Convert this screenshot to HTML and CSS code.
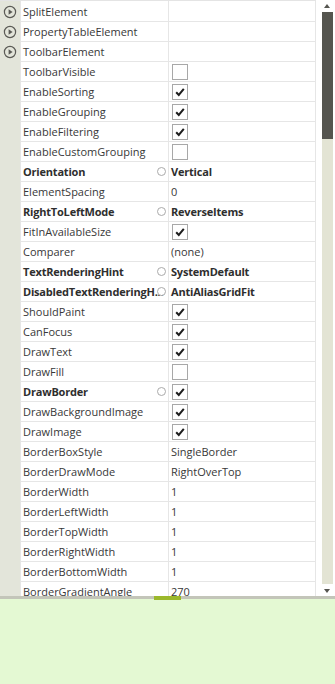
FILE: index.html
```html
<!DOCTYPE html>
<html>
<head>
<meta charset="utf-8">
<link rel="stylesheet" href="styles.css">
</head>
<body>
<div class="grid">
  <div class="rows">
    <div class="row first"><div class="gut"><svg class="exp" viewBox="0 0 14 14"><circle cx="7" cy="7" r="5.6"/><path d="M5.6 4.3 L9.6 7 L5.6 9.7 Z"/></svg></div><div class="name">SplitElement</div><div class="val"></div></div>
    <div class="row"><div class="gut"><svg class="exp" viewBox="0 0 14 14"><circle cx="7" cy="7" r="5.6"/><path d="M5.6 4.3 L9.6 7 L5.6 9.7 Z"/></svg></div><div class="name">PropertyTableElement</div><div class="val"></div></div>
    <div class="row"><div class="gut"><svg class="exp" viewBox="0 0 14 14"><circle cx="7" cy="7" r="5.6"/><path d="M5.6 4.3 L9.6 7 L5.6 9.7 Z"/></svg></div><div class="name">ToolbarElement</div><div class="val"></div></div>
    <div class="row"><div class="gut"></div><div class="name">ToolbarVisible</div><div class="val"><span class="cb"></span></div></div>
    <div class="row"><div class="gut"></div><div class="name">EnableSorting</div><div class="val"><span class="cb on"><svg viewBox="0 0 14 14"><path d="M3.2 7.2 L5.8 10 L10.8 3.8"/></svg></span></div></div>
    <div class="row"><div class="gut"></div><div class="name">EnableGrouping</div><div class="val"><span class="cb on"><svg viewBox="0 0 14 14"><path d="M3.2 7.2 L5.8 10 L10.8 3.8"/></svg></span></div></div>
    <div class="row"><div class="gut"></div><div class="name">EnableFiltering</div><div class="val"><span class="cb on"><svg viewBox="0 0 14 14"><path d="M3.2 7.2 L5.8 10 L10.8 3.8"/></svg></span></div></div>
    <div class="row"><div class="gut"></div><div class="name">EnableCustomGrouping</div><div class="val"><span class="cb"></span></div></div>
    <div class="row mod"><div class="gut"></div><div class="name">Orientation<span class="dot"></span></div><div class="val">Vertical</div></div>
    <div class="row"><div class="gut"></div><div class="name">ElementSpacing</div><div class="val">0</div></div>
    <div class="row mod"><div class="gut"></div><div class="name">RightToLeftMode<span class="dot"></span></div><div class="val">ReverseItems</div></div>
    <div class="row"><div class="gut"></div><div class="name">FitInAvailableSize</div><div class="val"><span class="cb on"><svg viewBox="0 0 14 14"><path d="M3.2 7.2 L5.8 10 L10.8 3.8"/></svg></span></div></div>
    <div class="row"><div class="gut"></div><div class="name">Comparer</div><div class="val">(none)</div></div>
    <div class="row mod"><div class="gut"></div><div class="name">TextRenderingHint<span class="dot"></span></div><div class="val">SystemDefault</div></div>
    <div class="row mod"><div class="gut"></div><div class="name">DisabledTextRenderingH...<span class="dot"></span></div><div class="val">AntiAliasGridFit</div></div>
    <div class="row"><div class="gut"></div><div class="name">ShouldPaint</div><div class="val"><span class="cb on"><svg viewBox="0 0 14 14"><path d="M3.2 7.2 L5.8 10 L10.8 3.8"/></svg></span></div></div>
    <div class="row"><div class="gut"></div><div class="name">CanFocus</div><div class="val"><span class="cb on"><svg viewBox="0 0 14 14"><path d="M3.2 7.2 L5.8 10 L10.8 3.8"/></svg></span></div></div>
    <div class="row"><div class="gut"></div><div class="name">DrawText</div><div class="val"><span class="cb on"><svg viewBox="0 0 14 14"><path d="M3.2 7.2 L5.8 10 L10.8 3.8"/></svg></span></div></div>
    <div class="row"><div class="gut"></div><div class="name">DrawFill</div><div class="val"><span class="cb"></span></div></div>
    <div class="row mod"><div class="gut"></div><div class="name">DrawBorder<span class="dot"></span></div><div class="val"><span class="cb on"><svg viewBox="0 0 14 14"><path d="M3.2 7.2 L5.8 10 L10.8 3.8"/></svg></span></div></div>
    <div class="row"><div class="gut"></div><div class="name">DrawBackgroundImage</div><div class="val"><span class="cb on"><svg viewBox="0 0 14 14"><path d="M3.2 7.2 L5.8 10 L10.8 3.8"/></svg></span></div></div>
    <div class="row"><div class="gut"></div><div class="name">DrawImage</div><div class="val"><span class="cb on"><svg viewBox="0 0 14 14"><path d="M3.2 7.2 L5.8 10 L10.8 3.8"/></svg></span></div></div>
    <div class="row"><div class="gut"></div><div class="name">BorderBoxStyle</div><div class="val">SingleBorder</div></div>
    <div class="row"><div class="gut"></div><div class="name">BorderDrawMode</div><div class="val">RightOverTop</div></div>
    <div class="row"><div class="gut"></div><div class="name">BorderWidth</div><div class="val">1</div></div>
    <div class="row"><div class="gut"></div><div class="name">BorderLeftWidth</div><div class="val">1</div></div>
    <div class="row"><div class="gut"></div><div class="name">BorderTopWidth</div><div class="val">1</div></div>
    <div class="row"><div class="gut"></div><div class="name">BorderRightWidth</div><div class="val">1</div></div>
    <div class="row"><div class="gut"></div><div class="name">BorderBottomWidth</div><div class="val">1</div></div>
    <div class="row"><div class="gut"></div><div class="name">BorderGradientAngle</div><div class="val">270</div></div>
  </div>
  <div class="scrollbar">
    <div class="arrow up"></div>
    <div class="track"><div class="thumb"></div></div>
    <div class="arrow down"></div>
  </div>
</div>
<div class="footer"><div class="grip"></div></div>
</body>
</html>
```

FILE: styles.css
```css
html, body {
  margin: 0;
  padding: 0;
}
body {
  width: 335px;
  height: 684px;
  background: #e4f9d3;
  font-family: "Open Sans", "Noto Sans", sans-serif;
  font-size: 11px;
  color: #383838;
  overflow: hidden;
}
.grid {
  display: flex;
  height: 596px;
  background: #ffffff;
  overflow: hidden;
}
.rows {
  width: 316px;
  border-top: 1px solid #e4e4e4;
  box-sizing: border-box;
  overflow: hidden;
}
.row {
  display: grid;
  grid-template-columns: 20px 149px 147px;
  height: 20px;
}
.row.first {
  height: 21px;
}
.gut {
  background: #e3e5da;
  display: flex;
  align-items: center;
  justify-content: center;
}
.exp {
  width: 14px;
  height: 14px;
  margin-left: -1px;
}
.exp circle {
  fill: none;
  stroke: #5a5a55;
  stroke-width: 1.2;
}
.exp path {
  fill: #5a5a55;
}
.name, .val {
  box-sizing: border-box;
  border-bottom: 1px solid #e6e6e6;
  border-right: 1px solid #e6e6e6;
  display: flex;
  align-items: center;
  white-space: nowrap;
  overflow: hidden;
  padding-left: 2px;
}
.name {
  border-left: 1px solid #e6e6e6;
  position: relative;
}
.mod .name, .mod .val {
  font-weight: 700;
  letter-spacing: -0.2px;
  color: #2e2e2e;
}
.dot {
  position: absolute;
  right: 2px;
  top: 5px;
  width: 9px;
  height: 9px;
  box-sizing: border-box;
  border: 1.6px solid #aaaaaa;
  border-radius: 50%;
  background: #ffffff;
}
.cb {
  width: 14px;
  height: 14px;
  border: 1px solid #a8a8a8;
  background: #ffffff;
  margin-left: 1px;
  display: flex;
}
.cb svg {
  width: 14px;
  height: 14px;
}
.cb path {
  fill: none;
  stroke: #1e1e1e;
  stroke-width: 2;
}
.scrollbar {
  width: 19px;
  display: flex;
  flex-direction: column;
  align-items: center;
  background: #ffffff;
}
.arrow {
  width: 0;
  height: 0;
  border-left: 3.5px solid transparent;
  border-right: 3.5px solid transparent;
}
.arrow.up {
  border-bottom: 4px solid #555550;
  margin: 4px 0 4px 3px;
}
.arrow.down {
  border-top: 4px solid #555550;
  margin: 5px 0 3px 3px;
}
.track {
  flex: 1;
  width: 11px;
  margin-left: 3px;
  background: #e3e4d4;
}
.thumb {
  height: 127px;
  background: #55554f;
}
.footer {
  height: 88px;
  border-top: 3px solid #c3c5b9;
  box-sizing: border-box;
  display: flex;
  justify-content: center;
  position: relative;
}
.grip {
  position: absolute;
  left: 154px;
  top: -3px;
  width: 27px;
  height: 4px;
  background: #9bb82b;
}
```
